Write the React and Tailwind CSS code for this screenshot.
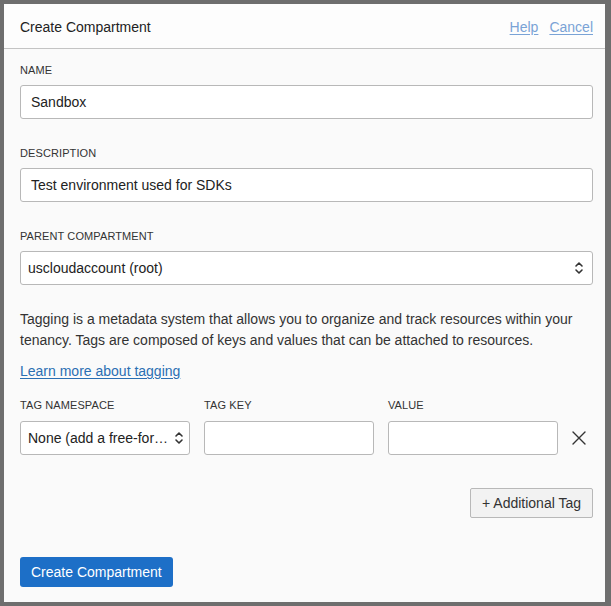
import React from "react";

const Chevrons = () => (
  <svg width="10" height="16" viewBox="0 0 10 16" fill="none" stroke="#333" strokeWidth="1.6" strokeLinecap="round" strokeLinejoin="round">
    <path d="M2 6 L5 3 L8 6" />
    <path d="M2 10 L5 13 L8 10" />
  </svg>
);

const Label = ({ children, className = "" }) => (
  <div className={"text-[11px] leading-[14px] text-[#333] uppercase tracking-[0.1px] " + className}>{children}</div>
);

export default function App() {
  return (
    <div className="w-[611px] h-[606px] bg-[#6e6e6e] pt-[4px] pl-[4px] pr-[6px] pb-[4px]" style={{ fontFamily: '"Liberation Sans", Arial, sans-serif' }}>
      <div className="w-[601px] h-[598px] bg-[#fafafa] flex flex-col">
        <div className="h-[45px] bg-[#fdfdfd] border-b border-[#c4c4c4] flex items-center justify-between pl-[16px] pr-[12px] pt-[3px] shrink-0">
          <div className="text-[14px] text-[#222] font-medium">Create Compartment</div>
          <div className="flex gap-[11px] text-[14px] text-[#7aa3d6]">
            <span className="underline underline-offset-2">Help</span>
            <span className="underline underline-offset-2">Cancel</span>
          </div>
        </div>
        <div className="flex-1 pl-[16px] pr-[12px] flex flex-col">
          <Label className="mt-[14px]">Name</Label>
          <div className="mt-[8px] h-[34px] bg-white border border-[#b8b8b8] rounded-[3px] flex items-center px-[10px] text-[14px] text-[#222]">Sandbox</div>

          <Label className="mt-[27px]">Description</Label>
          <div className="mt-[8px] h-[34px] bg-white border border-[#b8b8b8] rounded-[3px] flex items-center px-[10px] text-[14px] text-[#222]">Test environment used for SDKs</div>

          <Label className="mt-[27px]">Parent Compartment</Label>
          <div className="mt-[8px] h-[34px] bg-white border border-[#b8b8b8] rounded-[3px] flex items-center justify-between pl-[7px] pr-[8px] text-[14px] text-[#222]">
            <span>uscloudaccount (root)</span>
            <Chevrons />
          </div>

          <p className="mt-[24px] text-[14px] leading-[21px] text-[#333]">
            Tagging is a metadata system that allows you to organize and track resources within your tenancy. Tags are composed of keys and values that can be attached to resources.
          </p>
          <div className="mt-[10px] text-[14px] leading-[21px] text-[#2a6fb3] underline underline-offset-2">Learn more about tagging</div>

          <div className="mt-[16px] flex items-end">
            <div className="w-[170px]">
              <Label>Tag Namespace</Label>
              <div className="mt-[9px] h-[34px] bg-white border border-[#b8b8b8] rounded-[3px] flex items-center justify-between pl-[7px] pr-[5px] text-[14px] text-[#222]">
                <span className="whitespace-nowrap">None (add a free-for…</span>
                <Chevrons />
              </div>
            </div>
            <div className="w-[170px] ml-[14px]">
              <Label>Tag Key</Label>
              <div className="mt-[9px] h-[34px] bg-white border border-[#b8b8b8] rounded-[3px]"></div>
            </div>
            <div className="w-[170px] ml-[14px]">
              <Label>Value</Label>
              <div className="mt-[9px] h-[34px] bg-white border border-[#b8b8b8] rounded-[3px]"></div>
            </div>
            <div className="h-[34px] flex-1 flex items-center justify-center pl-[6px]">
              <svg width="14" height="14" viewBox="0 0 14 14" stroke="#333" strokeWidth="1.4" strokeLinecap="round">
                <path d="M1 1 L13 13 M13 1 L1 13" />
              </svg>
            </div>
          </div>

          <div className="mt-[33px] flex justify-end">
            <div className="h-[30px] px-[11px] bg-[#f2f2f2] border border-[#b8b8b8] rounded-[2px] flex items-center text-[14px] text-[#333]">+ Additional Tag</div>
          </div>

          <div className="mt-[39px]">
            <div className="inline-flex h-[30px] px-[11px] bg-[#1d6fc7] rounded-[3px] items-center text-[14px] text-white">Create Compartment</div>
          </div>
        </div>
      </div>
    </div>
  );
}
